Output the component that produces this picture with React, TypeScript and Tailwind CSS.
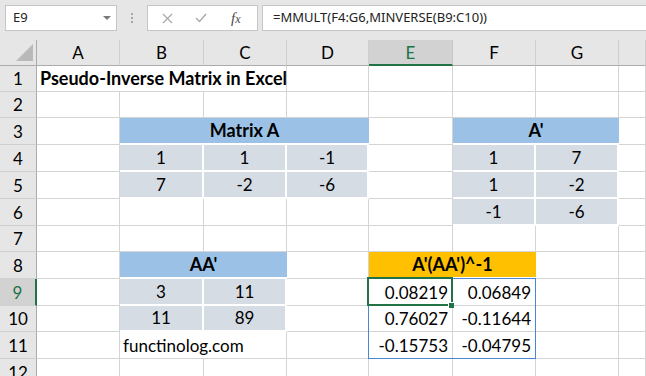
import React from 'react';

type Kind = 'plain' | 'blue' | 'gray' | 'orange';
type Cell = { span?: number; text?: string; kind?: Kind; align?: 'left' | 'center' | 'right'; bold?: boolean };

const e = (n = 1): Cell => ({ span: n });
const g = (text: string): Cell => ({ kind: 'gray', text, align: 'center' });
const r = (text: string): Cell => ({ text, align: 'right' });

const rows: Cell[][] = [
  [{ span: 3, text: 'Pseudo-Inverse Matrix in Excel', bold: true, align: 'left' }, e(), e(), e(), e(), e()],
  [e(), e(), e(), e(), e(), e(), e(), e()],
  [e(), { span: 3, kind: 'blue', text: 'Matrix A', bold: true, align: 'center' }, e(), { span: 2, kind: 'blue', text: "A'", bold: true, align: 'center' }, e()],
  [e(), g('1'), g('1'), g('-1'), e(), g('1'), g('7'), e()],
  [e(), g('7'), g('-2'), g('-6'), e(), g('1'), g('-2'), e()],
  [e(), e(), e(), e(), e(), g('-1'), g('-6'), e()],
  [e(), e(), e(), e(), e(), e(), e(), e()],
  [e(), { span: 2, kind: 'blue', text: "AA'", bold: true, align: 'center' }, e(), { span: 2, kind: 'orange', text: "A'(AA')^-1", bold: true, align: 'center' }, e(), e()],
  [e(), g('3'), g('11'), e(), r('0.08219'), r('0.06849'), e(), e()],
  [e(), g('11'), g('89'), e(), r('0.76027'), r('-0.11644'), e(), e()],
  [e(), { span: 2, text: 'functinolog.com', align: 'left' }, e(), r('-0.15753'), r('-0.04795'), e(), e()],
  [e(), e(), e(), e(), e(), e(), e(), e()],
];

const kindClass: Record<Kind, string> = {
  plain: 'bg-white border-r border-b border-[#d4d4d4]',
  blue: 'bg-[#9bc2e6] border-b-2 border-white',
  gray: 'bg-[#d6dce4] border-r-2 border-b-2 border-white',
  orange: 'bg-[#ffc000] border-b-2 border-white',
};

const spanClass: Record<number, string> = { 1: 'col-span-1', 2: 'col-span-2', 3: 'col-span-3' };
const alignClass = { left: 'justify-start pl-[3px]', center: 'justify-center', right: 'justify-end pr-[4px]' };

const letters = ['A', 'B', 'C', 'D', 'E', 'F', 'G', ''];

function Toolbar() {
  return (
    <div className="h-[40px] bg-[#e6e6e6] flex items-start pt-[5px] font-['Noto_Sans'] text-[13px] text-[#222]">
      <div className="ml-[5px] w-[112px] h-[26px] bg-white border border-[#c6c6c6] flex items-center pl-[7px] pr-[5px]">
        <span className="flex-1">E9</span>
        <svg width="8" height="5" viewBox="0 0 8 5"><polygon points="0,0 8,0 4,4" fill="#7a7a7a" /></svg>
      </div>
      <div className="w-[30px] h-[26px] flex flex-col items-center justify-center gap-[2px]">
        <div className="w-[2px] h-[2px] bg-[#a6a6a6]" />
        <div className="w-[2px] h-[2px] bg-[#a6a6a6]" />
        <div className="w-[2px] h-[2px] bg-[#a6a6a6]" />
      </div>
      <div className="w-[111px] h-[26px] bg-white border border-[#c6c6c6] flex items-center pl-[14px] pr-[10px] gap-[22px]">
        <svg width="11" height="11" viewBox="0 0 11 11"><path d="M1 1 L10 10 M10 1 L1 10" stroke="#a8a8a8" strokeWidth="1.2" /></svg>
        <svg width="12" height="10" viewBox="0 0 12 10"><path d="M1 5 L4.5 8.5 L11 1" stroke="#a8a8a8" strokeWidth="1.4" fill="none" /></svg>
        <span className="font-['Liberation_Serif'] italic text-[15px] text-[#4a4a4a] leading-none ml-[2px]">f<span className="text-[12px]">x</span></span>
      </div>
      <div className="ml-[4px] flex-1 h-[26px] bg-white border border-r-0 border-[#c6c6c6] flex items-center pl-[10px] whitespace-nowrap">
        =MMULT(F4:G6,MINVERSE(B9:C10))
      </div>
    </div>
  );
}

export default function App() {
  return (
    <div className="w-[646px] h-[376px] overflow-hidden bg-white">
      <Toolbar />
      <div className="relative font-['Lato'] text-[17px] text-black">
        <div className="grid grid-cols-[37px_83px_84px_83px_82px_84px_83px_83px_27px] grid-rows-[26px_26px_26px_27px_27px_27px_27px_26px_27px_27px_26px_27px_27px]">
          <div className="bg-[#e6e6e6] border-r border-b border-[#ababab] relative">
            <svg className="absolute left-0 top-0" width="36" height="25" viewBox="0 0 36 25">
              <polygon points="33,4 33,21 16,21" fill="#b9b9b9" />
            </svg>
          </div>
          {letters.map((l, i) =>
            l === 'E' ? (
              <div key={i} className="bg-[#d2d2d2] border-r border-r-[#c6c6c6] border-b-2 border-b-[#217346] flex items-end justify-center pb-[3px] leading-none text-[#217346]">
                {l}
              </div>
            ) : (
              <div key={i} className="bg-[#e6e6e6] border-r border-r-[#cfcfcf] border-b border-b-[#ababab] flex items-end justify-center pb-[4px] leading-none">
                {l}
              </div>
            )
          )}
          {rows.map((row, ri) => (
            <React.Fragment key={ri}>
              {ri === 8 ? (
                <div className="bg-[#d2d2d2] border-r-2 border-r-[#217346] border-b border-b-[#cfcfcf] flex items-end justify-center pb-[4px] leading-none text-[#217346]">
                  {ri + 1}
                </div>
              ) : (
                <div className="bg-[#e6e6e6] border-r border-r-[#ababab] border-b border-b-[#cfcfcf] flex items-end justify-center pb-[4px] leading-none">
                  {ri + 1}
                </div>
              )}
              {row.map((c, ci) => (
                <div
                  key={ci}
                  className={`${spanClass[c.span ?? 1]} ${kindClass[c.kind ?? 'plain']} ${alignClass[c.align ?? 'left']} flex items-end pb-[4px] leading-none whitespace-nowrap ${c.bold ? 'font-bold text-[18px]' : ''}`}
                >
                  {c.text}
                </div>
              ))}
            </React.Fragment>
          ))}
        </div>
        {/* array range + active cell */}
        <div className="absolute left-[368px] top-[238px] w-[168px] h-[81px] border border-[#4a86d4] pointer-events-none" />
        <div className="absolute left-[367px] top-[237px] w-[86px] h-[29px] border-2 border-[#217346] pointer-events-none" />
        <div className="absolute left-[448px] top-[262px] w-[6px] h-[6px] bg-[#217346] border-l border-t border-white" />
      </div>
    </div>
  );
}
